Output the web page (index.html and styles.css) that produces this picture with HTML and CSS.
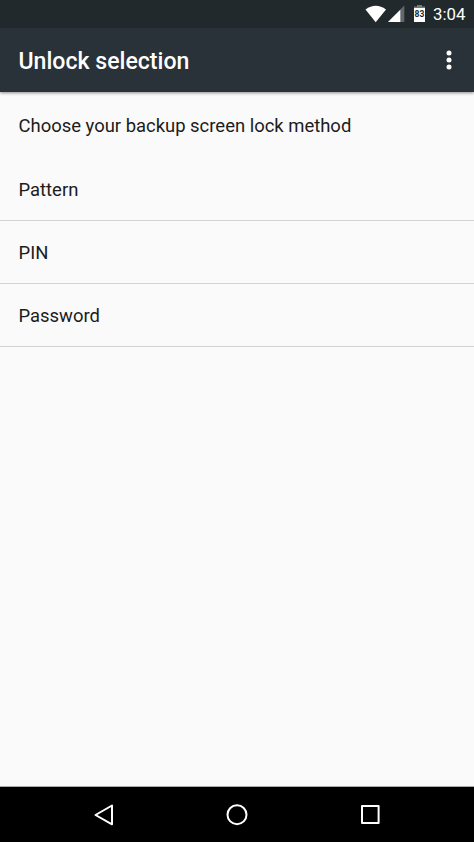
FILE: index.html
```html
<!DOCTYPE html>
<html lang="en">
<head>
<meta charset="utf-8">
<title>Unlock selection</title>
<link rel="stylesheet" href="styles.css">
</head>
<body>
<header class="status">
  <svg class="icons" width="62" height="28" viewBox="0 0 62 28">
    <path fill="#fff" d="M1.500 9.500Q11.700 2 22 9.500L11.700 22.200Z"/>
    <path fill="#62696c" d="M40.300 5.500V22H24Z"/>
    <path fill="#fff" d="M36.300 9.700V22H24Z"/>
    <path fill="#737a7d" d="M50 8V6.500H53V5H58V6.500H61V8Z"/>
    <path fill="#fff" d="M50 8H61V22H50Z"/>
  </svg>
  <span class="level">83</span>
  <span class="clock">3:04</span>
</header>
<div class="toolbar">
  <h1>Unlock selection</h1>
  <svg width="6" height="20" viewBox="0 0 6 20" fill="#fff"><circle cx="3" cy="3" r="2.500"/><circle cx="3" cy="10" r="2.500"/><circle cx="3" cy="17" r="2.500"/></svg>
</div>
<main>
  <p class="prompt">Choose your backup screen lock method</p>
  <ul>
    <li>Pattern</li>
    <li>PIN</li>
    <li>Password</li>
  </ul>
</main>
<nav class="nav">
  <svg width="24" height="24" viewBox="0 0 24 24"><path d="M20 2.500V21.300L3.500 12Z"/></svg>
  <svg width="24" height="24" viewBox="0 0 24 24"><circle cx="12" cy="11.700" r="9.500"/></svg>
  <svg width="24" height="24" viewBox="0 0 24 24"><path d="M4 3H20.600V20H4Z"/></svg>
</nav>
</body>
</html>
```
FILE: styles.css
```css
* { box-sizing: border-box; margin: 0; padding: 0; }
body { width: 474px; height: 842px; display: flex; flex-direction: column; background: #fafafa; color: #1c1c1c; font: 18.45px Roboto, sans-serif; overflow: hidden; }
.status { position: relative; height: 28px; background: #21292d; color: #fff; display: flex; align-items: center; justify-content: flex-end; padding-right: 8px; flex: none; }
.icons { margin-right: 7px; }
.level { position: absolute; left: 414px; top: 8px; width: 11px; text-align: center; font-size: 8.5px; line-height: 12px; font-weight: 700; color: #21292d; }
.clock { width: 33px; font-size: 16.8px; }
.toolbar { height: 64px; flex: none; background: #283238; color: #fff; display: flex; align-items: center; justify-content: space-between; padding: 0 22px 0 18.5px; box-shadow: 0 1px 3px rgba(0,0,0,.45); }
h1 { font-size: 23.1px; font-weight: 500; padding-top: 2px; }
main { flex: 1; }
.prompt { height: 66px; line-height: 68px; padding-left: 18.5px; }
ul { list-style: none; }
li { height: 63px; line-height: 65px; padding-left: 18.5px; border-bottom: 1px solid #d2d2d2; }
.nav { height: 56px; flex: none; background: #000; border-top: 1px solid #a8a8a8; display: flex; align-items: center; justify-content: center; gap: 109px; }
.nav svg { fill: none; stroke: #fff; stroke-width: 2; stroke-linejoin: round; }
```
